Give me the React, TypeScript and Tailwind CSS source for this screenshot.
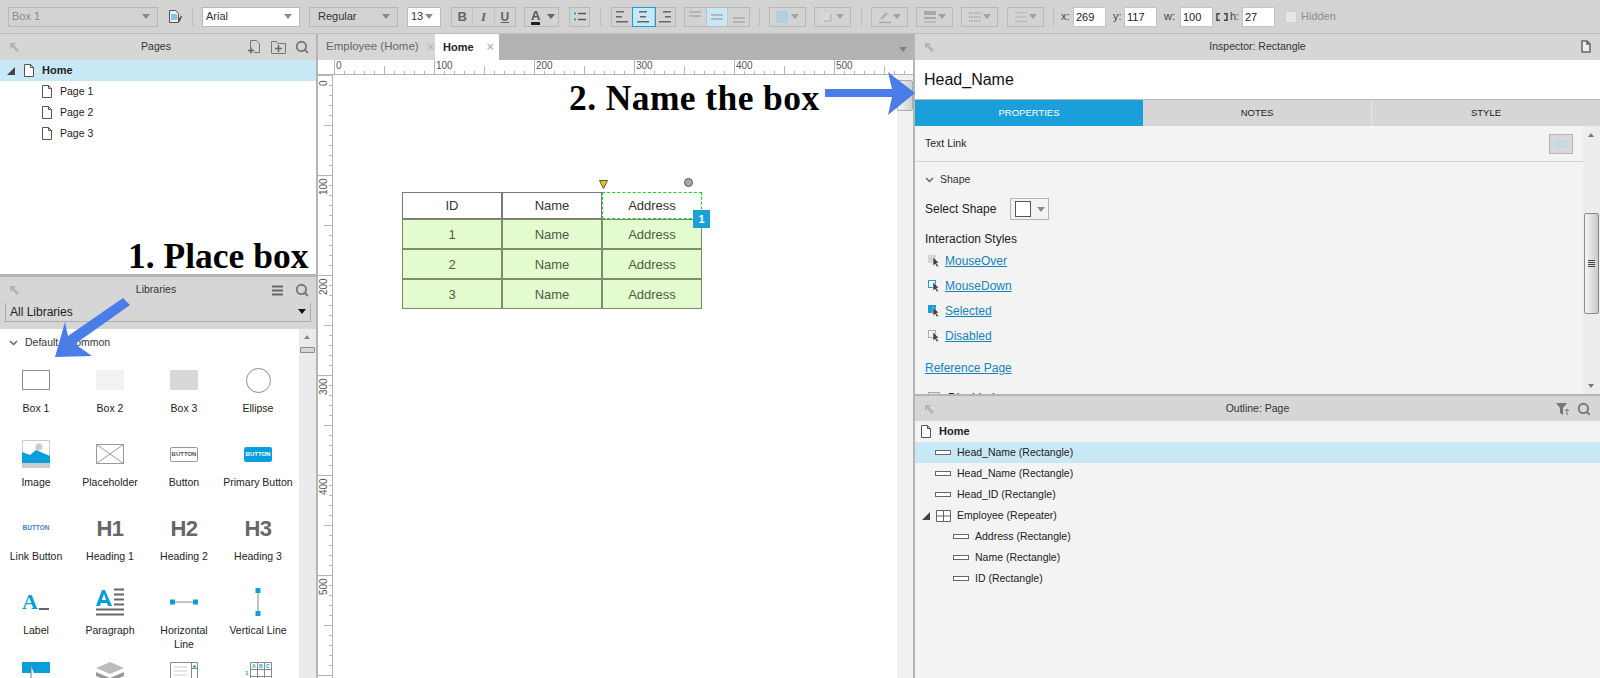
import { Search } from "lucide-react";
import type { ReactNode } from "react";

const BORDER = "border border-[#b9b9b9]";

function Caret({ color = "#8a8a8a" }: { color?: string }) {
  return (
    <svg width="8" height="5" viewBox="0 0 8 5" className="shrink-0">
      <path d="M0 0h8L4 5z" fill={color} />
    </svg>
  );
}

function Collapse() {
  return (
    <svg width="9" height="9" viewBox="0 0 9 9" className="shrink-0">
      <path d="M0 0h6L4 2l5 5-2 2-5-5-2 2z" fill="#b4b4b4" />
    </svg>
  );
}

function PageIcon({ color = "#555" }: { color?: string }) {
  return (
    <svg width="10" height="13" viewBox="0 0 10 13" className="shrink-0">
      <path d="M.5.5h6l3 3v9H.5zM6.5.5v3h3" fill="#fff" stroke={color} />
    </svg>
  );
}

function Tri() {
  return (
    <svg width="8" height="8" viewBox="0 0 8 8" className="shrink-0">
      <path d="M8 0v8H0z" fill="#444" />
    </svg>
  );
}

function Chevron() {
  return (
    <svg width="9" height="6" viewBox="0 0 9 6" className="shrink-0">
      <path d="M1 1l3.5 3.5L8 1" fill="none" stroke="#666" strokeWidth="1.5" />
    </svg>
  );
}

function RectIcon() {
  return (
    <svg width="16" height="5" viewBox="0 0 16 5" className="shrink-0">
      <rect x=".5" y=".5" width="15" height="4" fill="#fff" stroke="#666" />
    </svg>
  );
}

function Lines({ rows }: { rows: [number, number, number][] }) {
  return (
    <svg width="14" height="14" viewBox="0 0 14 14">
      {rows.map(([x, y, w], i) => (
        <rect key={i} x={x} y={y} width={w} height="1.5" fill="#666" />
      ))}
    </svg>
  );
}

function FaintLines({ rows, dash }: { rows: [number, number][]; dash?: boolean }) {
  return (
    <svg width="14" height="14" viewBox="0 0 14 14">
      {rows.map(([y, h], i) => (
        <line key={i} x1="1" x2="13" y1={y} y2={y} stroke="#a8a8a8" strokeWidth={h} strokeDasharray={dash ? "1.5 1" : undefined} />
      ))}
    </svg>
  );
}

function ToolSelect({ label, w, ml, white, dim }: { label: string; w: string; ml: string; white?: boolean; dim?: boolean }) {
  return (
    <div className={`${w} ${ml} h-[20px] shrink-0 flex items-center justify-between pl-[3px] pr-[7px] text-[11px] ${BORDER} ${white ? "bg-white text-[#222]" : "bg-[#d2d2d2]"} ${dim ? "text-[#8a8a8a]" : "text-[#333]"}`}>
      <span className={label === "Regular" ? "pl-[5px]" : ""}>{label}</span>
      <Caret />
    </div>
  );
}

function Sep({ ml }: { ml: string }) {
  return <div className={`${ml} w-px h-[18px] bg-[#bdbdbd] shrink-0`} />;
}

function Group({ ml, w, children }: { ml: string; w: string; children: ReactNode }) {
  return <div className={`${ml} ${w} h-[20px] shrink-0 flex ${BORDER} divide-x divide-[#c4c4c4]`}>{children}</div>;
}

function Cell({ children, active, soft }: { children: ReactNode; active?: boolean; soft?: boolean }) {
  return (
    <div className={`flex-1 flex items-center justify-center ${active ? "outline outline-1 outline-[#1a9fdb] bg-[#c9e8f6] z-10" : ""} ${soft ? "bg-[#c9e8f6]" : ""}`}>
      {children}
    </div>
  );
}

function DropBtn({ ml, children }: { ml: string; children: ReactNode }) {
  return (
    <div className={`${ml} w-[37px] h-[20px] shrink-0 flex items-center justify-between pl-[6px] pr-[6px] ${BORDER}`}>
      {children}
      <Caret color="#a2a2a2" />
    </div>
  );
}

function NumInput({ value }: { value: string }) {
  return <div className="w-[33px] h-[20px] shrink-0 bg-white border border-[#c4c4c4] pl-[2px] text-[11px] leading-[18px] text-[#222]">{value}</div>;
}

function Toolbar() {
  return (
    <div className="h-[34px] shrink-0 flex items-center pl-[8px] bg-[#d3d3d3] border-b border-[#bcbcbc] text-[#444]">
      <ToolSelect label="Box 1" w="w-[150px]" ml="" dim />
      <div className="ml-[10px] w-[14px] shrink-0">
        <svg width="14" height="14" viewBox="0 0 14 14">
          <path d="M1.5.5h6l3 3v9h-9z" fill="#eee" stroke="#555" />
          <path d="M3 5h6M3 7h6M3 9h6" stroke="#1a9fdb" />
          <path d="M10 7l1.5 3.5L13.5 6" fill="none" stroke="#444" strokeWidth="1.3" />
        </svg>
      </div>
      <Sep ml="ml-[10px]" />
      <ToolSelect label="Arial" w="w-[98px]" ml="ml-[9px]" white />
      <ToolSelect label="Regular" w="w-[89px]" ml="ml-[9px]" />
      <ToolSelect label="13" w="w-[34px]" ml="ml-[9px]" white />
      <Group ml="ml-[10px]" w="w-[65px]">
        <Cell><span className="text-[13px] font-bold text-[#666]">B</span></Cell>
        <Cell><span className="text-[13px] font-bold italic text-[#666] [font-family:'Liberation_Serif',serif]">I</span></Cell>
        <Cell><span className="text-[12px] font-bold underline text-[#666]">U</span></Cell>
      </Group>
      <div className={`ml-[8px] w-[35px] h-[20px] shrink-0 flex items-center justify-between pl-[6px] pr-[3px] ${BORDER}`}>
        <span className="text-[13px] font-bold leading-[13px] text-[#555] border-b-[3px] border-[#222]">A</span>
        <Caret color="#666" />
      </div>
      <div className={`ml-[10px] w-[21px] h-[20px] shrink-0 flex items-center justify-center ${BORDER}`}>
        <svg width="12" height="10" viewBox="0 0 12 10">
          <path d="M0 1.5h2M0 7.5h2" stroke="#1a9fdb" strokeWidth="2" />
          <path d="M4 1.5h8M4 7.5h8" stroke="#555" strokeWidth="1.5" />
        </svg>
      </div>
      <Sep ml="ml-[10px]" />
      <Group ml="ml-[10px]" w="w-[65px]">
        <Cell><Lines rows={[[1, 1, 8], [1, 6, 6], [1, 11, 12]]} /></Cell>
        <Cell active><Lines rows={[[3, 1, 8], [4, 6, 6], [1, 11, 12]]} /></Cell>
        <Cell><Lines rows={[[5, 1, 8], [7, 6, 6], [1, 11, 12]]} /></Cell>
      </Group>
      <Group ml="ml-[8px]" w="w-[66px]">
        <Cell><FaintLines rows={[[2, 1.5], [6, 1.5]]} /></Cell>
        <Cell soft><FaintLines rows={[[5, 1.5], [9, 1.5]]} /></Cell>
        <Cell><FaintLines rows={[[8, 1.5], [12, 1.5]]} /></Cell>
      </Group>
      <Sep ml="ml-[9px]" />
      <DropBtn ml="ml-[9px]"><div className="w-[12px] h-[12px] bg-[#b3cfdf]" /></DropBtn>
      <DropBtn ml="ml-[8px]">
        <svg width="12" height="12" viewBox="0 0 12 12"><path d="M1 1h8v8H1z" fill="#d8d8d8" /><path d="M10 3v7H3" fill="none" stroke="#bbb" strokeWidth="1.5" /></svg>
      </DropBtn>
      <Sep ml="ml-[10px]" />
      <DropBtn ml="ml-[9px]">
        <svg width="14" height="14" viewBox="0 0 14 14"><path d="M3 9l6-6" stroke="#aaa" strokeWidth="2" /><path d="M1 12.5h12" stroke="#aaa" strokeWidth="1.5" /></svg>
      </DropBtn>
      <DropBtn ml="ml-[8px]"><FaintLines rows={[[3, 4], [8, 2], [12, 1]]} /></DropBtn>
      <DropBtn ml="ml-[8px]"><FaintLines rows={[[3, 1.5], [7, 1.5], [11, 1.5]]} dash /></DropBtn>
      <DropBtn ml="ml-[9px]">
        <svg width="14" height="14" viewBox="0 0 14 14"><path d="M1 2.5h12M1 7h12M1 11.5h12" stroke="#b4b4b4" /><path d="M7 1v12" stroke="#c8c8c8" /></svg>
      </DropBtn>
      <Sep ml="ml-[9px]" />
      <div className="ml-[7px] w-[12px] shrink-0 text-[11px]">x:</div>
      <NumInput value="269" />
      <div className="ml-[7px] w-[11px] shrink-0 text-[11px]">y:</div>
      <NumInput value="117" />
      <div className="ml-[7px] w-[16px] shrink-0 text-[11px]">w:</div>
      <NumInput value="100" />
      <div className="ml-[3px] w-[14px] shrink-0">
        <svg width="12" height="8" viewBox="0 0 12 8" className="block"><path d="M4 .8H1v6.4h3M8 .8h3v6.4H8" fill="none" stroke="#444" strokeWidth="1.5" /></svg>
      </div>
      <div className="w-[12px] shrink-0 text-[11px]">h:</div>
      <NumInput value="27" />
      <div className="ml-[10px] w-[12px] h-[12px] shrink-0 bg-[#e6e6e6] border border-[#cfcfcf]" />
      <div className="ml-[4px] text-[11px] text-[#8c8c8c]">Hidden</div>
    </div>
  );
}

function PanelHeader({ title, left, h = "h-[26px]", children }: { title: string; left?: boolean; h?: string; children?: ReactNode }) {
  return (
    <div className={`relative ${h} shrink-0 flex items-center justify-center bg-[#d6d6d6] text-[10.5px] text-[#333] ${left ? "pr-[4px]" : ""}`}>
      <div className="absolute left-[10px] top-[9px] flex"><Collapse /></div>
      {title}
      {children}
    </div>
  );
}

function TreeRow({ indent, icon, text, bold, selected, tri, gap = "ml-[8px]" }: { indent: string; icon: ReactNode; text: string; bold?: boolean; selected?: boolean; tri?: boolean; gap?: string }) {
  return (
    <div className={`relative h-[21px] flex items-center ${indent} ${selected ? "bg-[#c9e8f6]" : ""} ${bold ? "font-bold text-[11px]" : "text-[10.5px]"} text-[#222]`}>
      {tri && <div className="absolute left-[7px] top-[7px] flex"><Tri /></div>}
      {icon}
      <span className={gap}>{text}</span>
    </div>
  );
}

function LibIcon({ name }: { name: string }) {
  switch (name) {
    case "Box 1":
      return <div className="w-[28px] h-[20px] bg-white border border-[#8c8c8c]" />;
    case "Box 2":
      return <div className="w-[28px] h-[20px] bg-[#f2f2f2]" />;
    case "Box 3":
      return <div className="w-[28px] h-[20px] bg-[#d7d7d7]" />;
    case "Ellipse":
      return <div className="w-[25px] h-[25px] rounded-full bg-white border border-[#8c8c8c]" />;
    case "Image":
      return (
        <svg width="28" height="28" viewBox="0 0 28 28">
          <rect x=".5" y=".5" width="27" height="27" fill="#fff" stroke="#ccc" />
          <circle cx="17" cy="7" r="3.5" fill="#ccc" />
          <path d="M0 12l8 3 6-5 14 6v8H0z" fill="#0a9fdb" />
          <rect y="23" width="28" height="5" fill="#ccc" />
        </svg>
      );
    case "Placeholder":
      return (
        <svg width="28" height="20" viewBox="0 0 28 20">
          <path d="M.5.5h27v19H.5zM.5.5l27 19M27.5.5l-27 19" fill="#fff" stroke="#999" />
        </svg>
      );
    case "Button":
      return <div className="w-[28px] h-[15px] rounded-[2px] border border-[#999] bg-white text-[6px] font-bold text-[#555] leading-[13px] text-center">BUTTON</div>;
    case "Primary Button":
      return <div className="w-[28px] h-[15px] rounded-[2px] bg-[#0a9fdb] text-[6px] font-bold text-white leading-[15px] text-center">BUTTON</div>;
    case "Link Button":
      return <div className="text-[6.5px] font-bold text-[#4a7ebb]">BUTTON</div>;
    case "Heading 1":
      return <div className="text-[22px] -tracking-[0.5px] font-bold text-[#666]">H1</div>;
    case "Heading 2":
      return <div className="text-[22px] -tracking-[0.5px] font-bold text-[#666]">H2</div>;
    case "Heading 3":
      return <div className="text-[22px] -tracking-[0.5px] font-bold text-[#666]">H3</div>;
    case "Label":
      return (
        <div className="w-[28px] h-[18px] flex items-end">
          <span className="text-[22px] leading-[18px] font-bold text-[#0a9fdb] [font-family:'Liberation_Serif',serif]">A</span>
          <span className="ml-[1px] mb-[1px] w-[10px] h-[2px] bg-[#666]" />
        </div>
      );
    case "Paragraph":
      return (
        <svg width="28" height="28" viewBox="0 0 28 28">
          <path d="M18 1.5h10M18 6.5h10M18 11.5h10M18 16.5h10M0 21.5h28M0 26.5h28" stroke="#666" strokeWidth="2" />
          <path d="M0 18L6 2h3l7 16h-4l-1-3H5l-1 3zM6 12h4L8 6z" fill="#0a9fdb" fillRule="evenodd" />
        </svg>
      );
    case "Horizontal Line":
      return (
        <svg width="28" height="6" viewBox="0 0 28 6">
          <path d="M3 3h22" stroke="#888" />
          <rect width="5" height="5" y=".5" fill="#0a9fdb" />
          <rect x="23" y=".5" width="5" height="5" fill="#0a9fdb" />
        </svg>
      );
    case "Vertical Line":
      return (
        <svg width="6" height="28" viewBox="0 0 6 28">
          <path d="M3 3v22" stroke="#888" />
          <rect width="5" height="5" x=".5" fill="#0a9fdb" />
          <rect y="23" x=".5" width="5" height="5" fill="#0a9fdb" />
        </svg>
      );
    case "Dynamic":
      return (
        <svg width="28" height="28" viewBox="0 0 28 28">
          <rect width="28" height="11" fill="#0a9fdb" />
          <path d="M9 4v20l5-5 5 8" fill="#fff" stroke="#777" />
        </svg>
      );
    case "Layers":
      return (
        <svg width="28" height="28" viewBox="0 0 28 28">
          <path d="M14 0l14 6-14 6L0 6z" fill="#bcbcbc" />
          <path d="M0 10l14 6 14-6v4l-14 6L0 14z" fill="#999" />
        </svg>
      );
    case "Table":
      return (
        <svg width="28" height="28" viewBox="0 0 28 28">
          <path d="M.5.5h27v27H.5zM21.500.5v27" fill="#fff" stroke="#888" />
          <path d="M4 5h13M4 9h13M4 13h13M4 17h13" stroke="#ccc" />
          <path d="M22.500 5.500l2-3 2 3z" fill="#0a9fdb" />
          <path d="M21.500 6.500h6" stroke="#888" />
        </svg>
      );
    case "Grid":
      return (
        <svg width="28" height="28" viewBox="0 0 28 28">
          <path d="M6.500.5h21v27h-21zM13.500.5v27M20.500.5v27M6.500 7.500h21M6.500 14.500h21" fill="#fff" stroke="#888" />
          <text x="8" y="6" fontSize="5" fontWeight="bold" fill="#0a9fdb">A</text>
          <text x="15" y="6" fontSize="5" fontWeight="bold" fill="#0a9fdb">B</text>
          <text x="22" y="6" fontSize="5" fontWeight="bold" fill="#0a9fdb">C</text>
          <text x="1" y="13" fontSize="6" fontWeight="bold" fill="#0a9fdb">1</text>
        </svg>
      );
    default:
      return null;
  }
}

const libItems = [
  ["Box 1"], ["Box 2"], ["Box 3"], ["Ellipse"],
  ["Image"], ["Placeholder"], ["Button"], ["Primary Button"],
  ["Link Button"], ["Heading 1"], ["Heading 2"], ["Heading 3"],
  ["Label"], ["Paragraph"], ["Horizontal Line"], ["Vertical Line"],
  ["Dynamic", ""], ["Layers", ""], ["Table", ""], ["Grid", ""],
];

function LeftPanel() {
  return (
    <aside className="w-[316px] shrink-0 flex flex-col min-h-0">
      <div className="h-[240px] shrink-0 flex flex-col bg-white">
        <PanelHeader title="Pages" left>
          <div className="absolute left-[248px] top-[6px] flex items-center">
            <svg width="13" height="14" viewBox="0 0 13 14">
              <path d="M2.500 8V.5h6l3 3v9H6" fill="none" stroke="#777" />
              <path d="M0 10.500h6M3 7.500v6" stroke="#666" strokeWidth="1.500" />
            </svg>
            <svg width="15" height="13" viewBox="0 0 15 13" className="ml-[10px]">
              <path d="M.5 2.500V.5h5l1 2h8v10H.5z" fill="none" stroke="#777" />
              <path d="M4 7.500h7M7.500 4v7" stroke="#666" strokeWidth="1.500" />
            </svg>
            <Search size={14} strokeWidth={3.2} color="#777" className="ml-[9px]" />
          </div>
        </PanelHeader>
        <TreeRow indent="pl-[24px]" tri bold selected icon={<PageIcon />} text="Home" />
        {["Page 1", "Page 2", "Page 3"].map(p => (
          <TreeRow key={p} indent="pl-[42px]" icon={<PageIcon />} text={p} />
        ))}
      </div>
      <div className="h-[3px] shrink-0 bg-[#b5b5b5]" />
      <div className="h-[52px] shrink-0 flex flex-col bg-[#d6d6d6]">
        <PanelHeader title="Libraries" left>
          <div className="absolute left-[272px] top-[6px] flex items-center">
            <svg width="11" height="11" viewBox="0 0 11 11"><path d="M0 1.500h11M0 5.500h11M0 9.500h11" stroke="#666" strokeWidth="2" /></svg>
            <Search size={14} strokeWidth={3.2} color="#777" className="ml-[12px]" />
          </div>
        </PanelHeader>
        <div className="mx-[5px] h-[21px] flex items-center justify-between pl-[4px] pr-[4px] border border-[#aaa] text-[12px] text-[#222] -mt-[2px]">
          All Libraries
          <Caret color="#111" />
        </div>
      </div>
      <div className="flex-1 flex min-h-0 overflow-hidden bg-white">
        <div className="w-[299px] shrink-0">
          <div className="h-[27px] flex items-center pl-[9px] gap-[7px] text-[10.5px] text-[#333]">
            <Chevron />
            Default - Common
          </div>
          <div className="mt-[4px] -ml-px grid grid-cols-[repeat(4,74px)] auto-rows-[74px]">
            {libItems.map(([name, label]) => (
              <div key={name} className="flex flex-col items-center">
                <div className="h-[40px] shrink-0 flex items-center justify-center"><LibIcon name={name} /></div>
                <div className={`mt-[1px] text-[10.5px] leading-[14px] text-center text-[#222] ${name === "Horizontal Line" ? "w-[56px]" : "w-[72px]"}`}>{label ?? name}</div>
              </div>
            ))}
          </div>
        </div>
        <div className="relative w-[17px] shrink-0 bg-[#ebebeb]">
          <div className="absolute left-[5px] top-[6px] w-0 h-0 border-x-[3px] border-x-transparent border-b-[4px] border-b-[#888]" />
          <div className="absolute left-[1px] top-[18px] w-[15px] h-[6px] rounded-[1px] bg-[#d8d8d8] border border-[#8c8c8c]" />
        </div>
      </div>
    </aside>
  );
}

function RulerX() {
  const ticks = Array.from({ length: 58 }, (_, i) => i);
  return (
    <svg width="595" height="15" viewBox="0 0 595 15" className="block shrink-0">
      <rect width="595" height="15" fill="#fff" />
      {ticks.map(i => {
        const x = 16.5 + i * 10;
        const h = i % 10 === 0 ? 15 : i % 5 === 0 ? 9 : 4;
        return <line key={i} x1={x} x2={x} y1={15 - h} y2={15} stroke="#b4b4b4" />;
      })}
      {[0, 100, 200, 300, 400, 500].map(v => (
        <text key={v} x={18 + v} y={9} fontSize="10" fill="#555" fontFamily="Liberation Sans">{v}</text>
      ))}
      <line x1="0" x2="595" y1="14.500" y2="14.500" stroke="#b4b4b4" />
    </svg>
  );
}

function RulerY() {
  const ticks = Array.from({ length: 61 }, (_, i) => i);
  return (
    <svg width="15" height="603" viewBox="0 0 15 603" className="block shrink-0">
      <rect width="15" height="603" fill="#fff" />
      {ticks.map(i => {
        const y = 0.5 + i * 10;
        const h = i % 10 === 0 ? 15 : i % 5 === 0 ? 9 : 4;
        return <line key={i} x1={15 - h} x2={15} y1={y} y2={y} stroke="#b4b4b4" />;
      })}
      {[0, 100, 200, 300, 400, 500].map(v => (
        <text key={v} transform={`translate(9 ${v === 0 ? 11 : v + 20}) rotate(-90)`} fontSize="10" fill="#555" fontFamily="Liberation Sans">{v}</text>
      ))}
      <line x1="14.500" x2="14.500" y1="0" y2="603" stroke="#b4b4b4" />
    </svg>
  );
}

const rows = ["1", "2", "3"];

function RepeaterTable() {
  return (
    <div className="relative w-[300px] text-[13px] text-[#333]">
      <div className="absolute left-[197px] -top-[12px] flex">
        <svg width="9" height="9" viewBox="0 0 9 9"><path d="M.5.5h8L4.500 8.500z" fill="#f5c400" stroke="#555" /></svg>
      </div>
      <div className="absolute left-[282px] -top-[14px] w-[9px] h-[9px] rounded-full bg-[#a8a8a8] border border-[#555]" />
      <div className="grid grid-cols-3 h-[27px] bg-white">
        <div className="flex items-center justify-center pt-[1px] border border-[#797979]">ID</div>
        <div className="flex items-center justify-center pt-[1px] border border-[#797979]">Name</div>
        <div className="flex items-center justify-center pt-[1px] border border-dashed border-[#12d812]">Address</div>
      </div>
      {rows.map(r => (
        <div key={r} className="grid grid-cols-3 h-[30px] bg-[#e4fbd0] text-[#4d5c42]">
          <div className="flex items-center justify-center pt-[1px] border border-[#7e8c6c]">{r}</div>
          <div className="flex items-center justify-center pt-[1px] border border-[#7e8c6c]">Name</div>
          <div className="flex items-center justify-center pt-[1px] border border-[#7e8c6c]">Address</div>
        </div>
      ))}
      <div className="absolute left-[291px] top-[18px] w-[17px] h-[18px] bg-[#1a9fdb] text-white text-[11px] font-bold flex items-center justify-center">1</div>
    </div>
  );
}

function Center() {
  return (
    <main className="w-[595px] shrink-0 flex flex-col min-h-0 bg-white">
      <div className="relative h-[26px] shrink-0 flex bg-[#b3b3b3]">
        <div className="w-[117px] shrink-0 flex items-center pl-[8px] whitespace-nowrap bg-[#d6d6d6] text-[11.500px] text-[#666]">
          Employee (Home)
          <span className="ml-[8px] text-[13px] font-bold text-[#bdbdbd]">×</span>
        </div>
        <div className="w-[64px] shrink-0 flex items-center pl-[8px] bg-white text-[11px] font-bold text-[#222]">
          Home
          <span className="ml-[13px] text-[13px] font-bold text-[#bdbdbd]">×</span>
        </div>
        <div className="absolute right-[6px] top-[13px] flex"><Caret color="#808080" /></div>
      </div>
      <RulerX />
      <div className="flex-1 flex min-h-0 overflow-hidden">
        <RulerY />
        <div className="flex-1 pl-[69px] pt-[117px] bg-white">
          <RepeaterTable />
        </div>
        <div className="relative w-[16px] shrink-0 bg-[#f0f0f0]">
          <div className="absolute left-0 right-0 top-[5px] h-[31px] rounded-[2px] bg-gradient-to-r from-[#f4f4f4] to-[#cfcfcf] border border-[#aaa]" />
        </div>
      </div>
    </main>
  );
}

function StyleIcon({ kind }: { kind: "over" | "down" | "sel" | "dis" }) {
  return (
    <svg width="12" height="13" viewBox="0 0 12 13" className="shrink-0">
      {kind === "over" && <rect y="1" width="8" height="8" fill="#d4d4d4" />}
      {kind === "down" && <rect x=".5" y="1.500" width="7" height="7" fill="#fff" stroke="#1a9fdb" />}
      {kind === "sel" && <rect y="1" width="8" height="8" fill="#1a9fdb" />}
      {kind === "dis" && <rect x=".5" y="1.500" width="7" height="7" fill="none" stroke="#666" strokeDasharray="1 1" />}
      <path d="M5 3v9l2-2 2 3 1.500-1-2-3H11z" fill="#444" stroke="#f3f3f3" strokeWidth=".5" />
    </svg>
  );
}

const styleLinks: ["over" | "down" | "sel" | "dis", string][] = [
  ["over", "MouseOver"],
  ["down", "MouseDown"],
  ["sel", "Selected"],
  ["dis", "Disabled"],
];

function Inspector() {
  return (
    <section className="h-[360px] shrink-0 flex flex-col">
      <PanelHeader title="Inspector: Rectangle">
        <div className="absolute right-[9px] top-[6px] flex">
          <svg width="10" height="13" viewBox="0 0 10 13"><path d="M1 1h5l3 3v8H1zM6 1v3h3" fill="#eee" stroke="#666" strokeWidth="1.500" /></svg>
        </div>
      </PanelHeader>
      <div className="h-[40px] shrink-0 flex items-center pl-[9px] bg-white border-b border-[#bbb] text-[16px] text-[#111]">Head_Name</div>
      <div className="h-[26px] shrink-0 flex text-[9.500px]">
        <div className="w-[228px] flex items-center justify-center bg-[#1a9fdb] text-white">PROPERTIES</div>
        <div className="w-[229px] flex items-center justify-center bg-[#d6d6d6] border-r border-[#e6e6e6] text-[#222]">NOTES</div>
        <div className="flex-1 flex items-center justify-center bg-[#d6d6d6] text-[#222]">STYLE</div>
      </div>
      <div className="flex-1 flex min-h-0 bg-[#f3f3f3]">
        <div className="flex-1 min-w-0 overflow-hidden">
          <div className="h-[36px] flex items-center justify-between pl-[10px] pr-[10px] border-b border-[#d2d2d2] text-[10.5px] text-[#222]">
            Text Link
            <div className="w-[24px] h-[20px] flex items-center justify-center bg-[#d8d8d8] border border-[#b5b5b5]">
              <svg width="12" height="6" viewBox="0 0 12 6"><rect x=".5" y=".5" width="11" height="5" rx="2.500" fill="#c9dbe6" stroke="#b8d0de" /></svg>
            </div>
          </div>
          <div className="h-[35px] flex items-center pl-[10px] gap-[6px] text-[10.5px] text-[#333]">
            <Chevron />
            Shape
          </div>
          <div className="flex items-center pl-[10px] h-[24px] text-[12px] text-[#222]">
            <span className="w-[85px]">Select Shape</span>
            <div className="w-[39px] h-[22px] flex items-center gap-[6px] pl-[4px] border border-[#b5b5b5]">
              <div className="w-[16px] h-[16px] bg-white border border-[#555]" />
              <Caret />
            </div>
          </div>
          <div className="mt-[9px] pl-[10px] h-[18px] flex items-center text-[12px] text-[#222]">Interaction Styles</div>
          {styleLinks.map(([k, t]) => (
            <div key={t} className="h-[25px] flex items-center pl-[13px] gap-[5px] text-[12px] text-[#1484b8] underline">
              <StyleIcon kind={k} />
              {t}
            </div>
          ))}
          <div className="mt-[10px] h-[20px] pl-[10px] flex items-center text-[12px] text-[#1484b8] underline">Reference Page</div>
          <div className="mt-[11px] pl-[13px] flex items-center gap-[8px] text-[12px] text-[#222]">
            <div className="w-[12px] h-[12px] bg-[#e4e4e4] border border-[#aaa]" />
            Disabled
          </div>
        </div>
        <div className="relative w-[17px] shrink-0 bg-[#ededed]">
          <div className="absolute left-[5px] top-[7px] w-0 h-0 border-x-[3px] border-x-transparent border-b-[4px] border-b-[#777]" />
          <div className="absolute left-[1px] top-[87px] w-[15px] h-[101px] rounded-[2px] flex items-center justify-center bg-gradient-to-r from-[#f6f6f6] to-[#c8c8c8] border border-[#8a8a8a]">
            <svg width="7" height="8" viewBox="0 0 7 8"><path d="M0 .5h7M0 2.500h7M0 4.500h7M0 6.500h7" stroke="#444" /></svg>
          </div>
          <div className="absolute left-[5px] bottom-[6px] w-0 h-0 border-x-[3px] border-x-transparent border-t-[4px] border-t-[#777]" />
        </div>
      </div>
    </section>
  );
}

const GridIcon = (
  <svg width="15" height="12" viewBox="0 0 15 12" className="shrink-0">
    <path d="M.5.5h14v11H.5zM7.500.5v11M.5 6h14" fill="#fff" stroke="#666" />
  </svg>
);

function Outline() {
  return (
    <section className="flex-1 min-h-0 flex flex-col bg-[#f3f3f3]">
      <PanelHeader title="Outline: Page" h="h-[25px]">
        <div className="absolute right-[9px] top-[6px] flex items-center gap-[7px]">
          <svg width="14" height="13" viewBox="0 0 14 13">
            <path d="M0 0h11L7 5v7L4 10V5z" fill="#777" />
            <path d="M11 12V6M9 8l2-2 2 2" fill="none" stroke="#777" />
          </svg>
          <Search size={14} strokeWidth={3.2} color="#777" />
        </div>
      </PanelHeader>
      <div className="h-[21px] flex items-center pl-[6px] gap-[8px] text-[11px] font-bold text-[#222]">
        <svg width="10" height="13" viewBox="0 0 10 13" className="shrink-0"><path d="M.5.5h6l3 3v9H.5zM6.500.5v3h3" fill="#fff" stroke="#555" /></svg>
        Home
      </div>
      <TreeRow indent="pl-[20px]" selected gap="ml-[6px]" icon={<RectIcon />} text="Head_Name (Rectangle)" />
      <TreeRow indent="pl-[20px]" gap="ml-[6px]" icon={<RectIcon />} text="Head_Name (Rectangle)" />
      <TreeRow indent="pl-[20px]" gap="ml-[6px]" icon={<RectIcon />} text="Head_ID (Rectangle)" />
      <TreeRow indent="pl-[21px]" tri gap="ml-[6px]" icon={GridIcon} text="Employee (Repeater)" />
      <TreeRow indent="pl-[38px]" gap="ml-[6px]" icon={<RectIcon />} text="Address (Rectangle)" />
      <TreeRow indent="pl-[38px]" gap="ml-[6px]" icon={<RectIcon />} text="Name (Rectangle)" />
      <TreeRow indent="pl-[38px]" gap="ml-[6px]" icon={<RectIcon />} text="ID (Rectangle)" />
    </section>
  );
}

function Annotations() {
  return (
    <>
      <div className="absolute left-[128px] top-[237px] text-[35.500px] leading-[38px] font-bold text-black whitespace-nowrap [font-family:'Liberation_Serif',serif]">1. Place box</div>
      <div className="absolute left-[569px] top-[79px] text-[35.500px] leading-[38px] tracking-[0.4px] font-bold text-black whitespace-nowrap [font-family:'Liberation_Serif',serif]">2. Name the box</div>
      <svg width="1600" height="678" viewBox="0 0 1600 678" className="absolute left-0 top-0 pointer-events-none">
        <path d="M825 89h67l-4-17 27 21-27 22 4-18h-67z" fill="#4a7de8" />
        <path d="M123 298L130 305L75 344L92 356L55 357L65 322L68 336z" fill="#4a7de8" />
      </svg>
    </>
  );
}

export default function App() {
  return (
    <div className="relative w-[1600px] h-[678px] overflow-hidden flex flex-col bg-white [font-family:'Liberation_Sans',Arial,sans-serif]">
      <Toolbar />
      <div className="flex-1 flex min-h-0">
        <LeftPanel />
        <div className="w-[2px] shrink-0 bg-[#b5b5b5]" />
        <Center />
        <div className="w-[2px] shrink-0 bg-[#b5b5b5]" />
        <div className="flex-1 min-w-0 flex flex-col">
          <Inspector />
          <div className="h-[2px] shrink-0 bg-[#b5b5b5]" />
          <Outline />
        </div>
      </div>
      <Annotations />
    </div>
  );
}
